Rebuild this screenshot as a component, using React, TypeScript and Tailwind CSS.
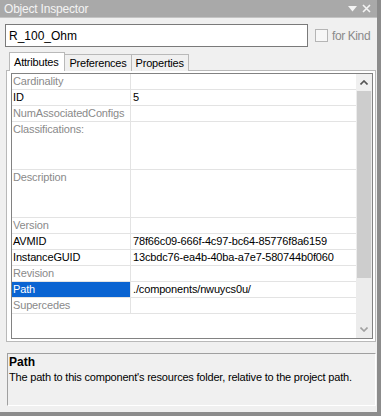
import { useState } from 'react';

type Row = { name: string; value?: string; muted?: boolean; tall?: boolean };

const rows: Row[] = [
  { name: 'Cardinality', muted: true },
  { name: 'ID', value: '5' },
  { name: 'NumAssociatedConfigs', muted: true },
  { name: 'Classifications:', muted: true, tall: true },
  { name: 'Description', muted: true, tall: true },
  { name: 'Version', muted: true },
  { name: 'AVMID', value: '78f66c09-666f-4c97-bc64-85776f8a6159' },
  { name: 'InstanceGUID', value: '13cbdc76-ea4b-40ba-a7e7-580744b0f060' },
  { name: 'Revision', muted: true },
  { name: 'Path', value: './components/nwuycs0u/' },
  { name: 'Supercedes', muted: true },
];

export default function App() {
  const [selected, setSelected] = useState('Path');

  return (
    <div
      className="w-[381px] h-[416px] bg-[#f0f0f0] border-r-[4px] border-b-[4px] border-[#8c8c8c] flex flex-col text-[11px] text-black overflow-hidden"
      style={{ fontFamily: '"Liberation Sans", Arial, sans-serif' }}
    >
      {/* Title bar */}
      <div className="h-[18px] shrink-0 bg-[#a9a9a9] flex items-center justify-between pl-[4px] pr-[6px] border-b border-[#c4c4c4]">
        <span className="text-[12px] text-[#f4f4f4] tracking-[-0.2px]">Object Inspector</span>
        <div className="flex items-center gap-[5px]">
          <svg width="9" height="6" viewBox="0 0 9 6">
            <path d="M0 0 H9 L4.5 5.5 Z" fill="#f4f4f4" />
          </svg>
          <svg width="9" height="9" viewBox="0 0 9 9">
            <path d="M1 1 L8 8 M8 1 L1 8" stroke="#f4f4f4" strokeWidth="1.6" />
          </svg>
        </div>
      </div>

      {/* Name + for Kind */}
      <div className="flex items-center mt-[6px] pl-[5px] h-[23px] shrink-0">
        <div className="w-[303px] h-[23px] bg-white border border-[#7a7a7a] flex items-center px-[3px] text-[12px]">
          R_100_Ohm
        </div>
        <div className="ml-[7px] w-[13px] h-[13px] border border-[#b5b5b5] bg-[#f7f7f7]" />
        <span className="ml-[4px] text-[12px] text-[#8a8a8a] tracking-[-0.4px]">for Kind</span>
      </div>

      {/* Tabs */}
      <div className="flex items-end mt-[5px] pl-[9px] h-[19px] shrink-0 relative z-10 text-[11px] tracking-[-0.2px]">
        <div className="h-[19px] pl-[4px] pr-[6px] bg-white border border-b-0 border-[#b9b9b9] flex items-center">
          Attributes
        </div>
        <div className="h-[17px] px-[4px] bg-[#f0f0f0] border border-l-0 border-b-0 border-[#b9b9b9] flex items-center">
          Preferences
        </div>
        <div className="h-[17px] px-[4px] bg-[#f0f0f0] border border-l-0 border-b-0 border-[#b9b9b9] flex items-center">
          Properties
        </div>
      </div>

      {/* Tab panel */}
      <div className="ml-[6px] w-[370px] h-[272px] shrink-0 -mt-px border border-[#b9b9b9] bg-white pt-[2px] pl-[4px] pr-[2px] pb-[2px]">
        <div className="h-full border border-[#828282] flex">
          <div className="flex-1 flex flex-col tracking-[-0.15px]">
            {rows.map((r) => {
              const isSel = r.name === selected;
              return (
                <div
                  key={r.name}
                  onClick={() => setSelected(r.name)}
                  className={`flex border-b border-[#e3e3e3] ${r.tall ? 'h-[48px]' : 'h-[16px]'}`}
                >
                  <div
                    className={`w-[119px] border-r border-[#e3e3e3] pl-[1px] leading-[15px] whitespace-nowrap overflow-hidden ${
                      isSel ? 'bg-[#0a64d2] text-white' : r.muted ? 'text-[#8a8a8a]' : 'text-black'
                    }`}
                  >
                    {r.name}
                  </div>
                  <div className="flex-1 pl-[2px] leading-[15px] whitespace-nowrap overflow-hidden">
                    {r.value ?? ''}
                  </div>
                </div>
              );
            })}
          </div>
          {/* Scrollbar */}
          <div className="w-[16px] flex flex-col bg-[#ececec]">
            <div className="h-[17px] flex items-center justify-center bg-[#f0f0f0]">
              <svg width="8" height="5" viewBox="0 0 8 5">
                <path d="M0.5 4.5 L4 1 L7.5 4.5" stroke="#555" strokeWidth="1.6" fill="none" />
              </svg>
            </div>
            <div className="h-[187px] mx-px bg-[#cdcdcd]" />
            <div className="flex-1" />
            <div className="h-[17px] flex items-center justify-center">
              <svg width="8" height="5" viewBox="0 0 8 5">
                <path d="M0.5 0.5 L4 4 L7.5 0.5" stroke="#a0a0a0" strokeWidth="1.6" fill="none" />
              </svg>
            </div>
          </div>
        </div>
      </div>

      {/* Description panel */}
      <div className="ml-[7px] w-[369px] mt-[11px] h-[53px] shrink-0 border-t border-l border-[#a0a0a0] border-r border-r-[#ffffff] border-b border-b-[#ffffff] px-[1px] pt-[1px]">
        <div className="font-bold text-[12px] leading-[15px]">Path</div>
        <div className="text-[11px] leading-[15px] whitespace-nowrap tracking-[-0.2px]">
          The path to this component's resources folder, relative to the project path.
        </div>
      </div>
    </div>
  );
}
